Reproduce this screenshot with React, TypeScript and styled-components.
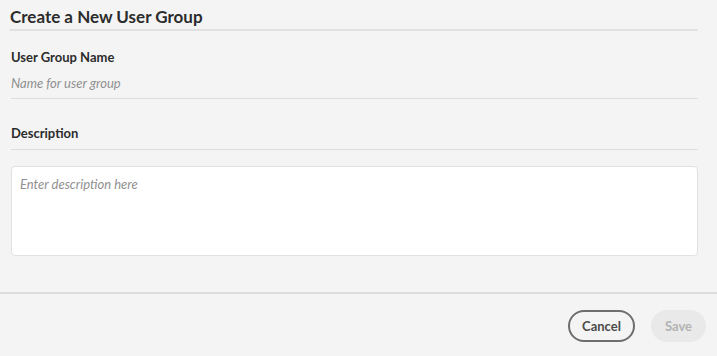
import React from "react";
import styled, { createGlobalStyle } from "styled-components";

const Global = createGlobalStyle`
  html, body { margin: 0; padding: 0; background: #f4f4f4; }
  body { font-family: Lato, "Open Sans", sans-serif; }
  * { box-sizing: border-box; }
`;

const Dialog = styled.div`
  width: 717px;
  height: 356px;
  background: #f4f4f4;
  display: flex;
  flex-direction: column;
`;

const Body = styled.div`
  flex: 1;
  padding: 0 19px 0 10px;
  display: flex;
  flex-direction: column;
`;

const Title = styled.h2`
  margin: 0;
  padding-top: 5px;
  height: 31px;
  font-size: 17px;
  font-weight: 700;
  line-height: 24px;
  color: #2c2c2c;
  border-bottom: 2px solid #e1e1e1;
`;

const Field = styled.div`
  padding-left: 1px;
  display: flex;
  flex-direction: column;
`;

const Label = styled.label<{ $top: number }>`
  margin-top: ${(p) => p.$top}px;
  font-size: 13px;
  font-weight: 700;
  line-height: 18px;
  color: #2c2c2c;
`;

const Input = styled.input`
  margin-top: 2px;
  height: 31px;
  border: none;
  border-bottom: 1px solid #dddddd;
  background: transparent;
  padding: 0;
  font-family: inherit;
  font-size: 13px;
  color: #2c2c2c;
  outline: none;
  &::placeholder { color: #909090; font-style: italic; }
`;

const Rule = styled.div`
  margin-top: 7px;
  height: 1px;
  background: #dddddd;
`;

const TextArea = styled.textarea`
  margin-top: 16px;
  height: 90px;
  resize: none;
  background: #ffffff;
  border: 1px solid #e1e1e1;
  border-radius: 4px;
  padding: 8px 8px;
  font-family: inherit;
  font-size: 13px;
  line-height: 18px;
  outline: none;
  &::placeholder { color: #909090; font-style: italic; }
`;

const Footer = styled.div`
  height: 64px;
  border-top: 2px solid #dcdcdc;
  display: flex;
  justify-content: flex-end;
  align-items: flex-start;
  gap: 16px;
  padding: 16px 11px 0 0;
`;

const Button = styled.button<{ $variant: "outline" | "disabled" }>`
  height: 32px;
  border-radius: 16px;
  padding: 0 12px;
  font-family: inherit;
  font-size: 13px;
  font-weight: 700;
  cursor: pointer;
  border: 2px solid ${(p) => (p.$variant === "outline" ? "#6e6e6e" : "#e9e9e9")};
  background: ${(p) => (p.$variant === "outline" ? "transparent" : "#e9e9e9")};
  color: ${(p) => (p.$variant === "outline" ? "#4b4b4b" : "#b3b3b3")};
`;

export default function App() {
  return (
    <Dialog>
      <Global />
      <Body>
        <Title>Create a New User Group</Title>
        <Field>
          <Label $top={17}>User Group Name</Label>
          <Input placeholder="Name for user group" />
          <Label $top={25}>Description</Label>
          <Rule />
          <TextArea placeholder="Enter description here" />
        </Field>
      </Body>
      <Footer>
        <Button $variant="outline">Cancel</Button>
        <Button $variant="disabled">Save</Button>
      </Footer>
    </Dialog>
  );
}
